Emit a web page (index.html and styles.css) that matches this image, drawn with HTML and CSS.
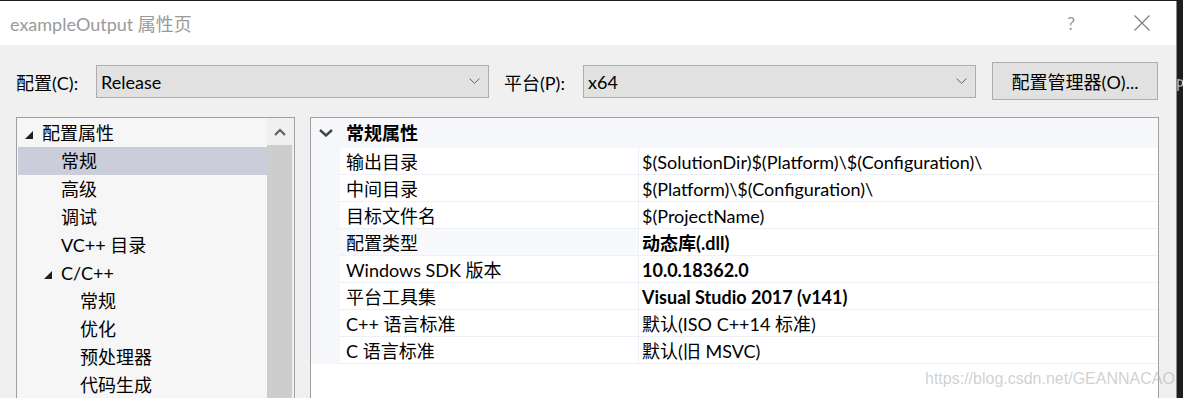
FILE: index.html
```html
<!DOCTYPE html>
<html>
<head>
<meta charset="utf-8">
<link rel="stylesheet" href="styles.css">
</head>
<body>
<div class="screen">
  <div class="window">
    <div class="titlebar">
      <span class="title">exampleOutput 属性页</span>
      <span class="help">?</span>
      <span class="close"><svg width="16" height="16" viewBox="0 0 16 16"><path d="M0.5 0.5 L15.5 15.5 M15.5 0.5 L0.5 15.5" stroke="#7a7a7a" stroke-width="1.1" fill="none"/></svg></span>
    </div>
    <div class="toolbar">
      <span class="lbl lbl-config">配置(C):</span>
      <div class="select"><span class="sel-text">Release</span><svg class="chev" width="11" height="6" viewBox="0 0 11 6"><path d="M0.5 0.5 L5.5 5.3 L10.5 0.5" stroke="#606060" stroke-width="1" fill="none"/></svg></div>
      <span class="lbl lbl-platform">平台(P):</span>
      <div class="select"><span class="sel-text">x64</span><svg class="chev" width="11" height="6" viewBox="0 0 11 6"><path d="M0.5 0.5 L5.5 5.3 L10.5 0.5" stroke="#606060" stroke-width="1" fill="none"/></svg></div>
      <button class="btn">配置管理器(O)...</button>
    </div>
    <div class="content">
      <div class="tree">
        <ul class="tree-list">
          <li class="item lv0"><span class="tw"><svg width="8" height="8" viewBox="0 0 8 8"><polygon points="8,0 8,8 0,8" fill="#1e1e1e"/></svg></span>配置属性</li>
          <li class="item lv1 selected"><span class="tw"></span>常规</li>
          <li class="item lv1"><span class="tw"></span>高级</li>
          <li class="item lv1"><span class="tw"></span>调试</li>
          <li class="item lv1"><span class="tw"></span>VC++ 目录</li>
          <li class="item lv1"><span class="tw"><svg width="8" height="8" viewBox="0 0 8 8"><polygon points="8,0 8,8 0,8" fill="#1e1e1e"/></svg></span>C/C++</li>
          <li class="item lv2"><span class="tw"></span>常规</li>
          <li class="item lv2"><span class="tw"></span>优化</li>
          <li class="item lv2"><span class="tw"></span>预处理器</li>
          <li class="item lv2"><span class="tw"></span>代码生成</li>
        </ul>
        <div class="scrollbar">
          <div class="sb-up"><svg width="12" height="8" viewBox="0 0 12 8"><path d="M1 7 L6 2 L11 7" stroke="#606060" stroke-width="2.2" fill="none"/></svg></div>
          <div class="sb-thumb"></div>
        </div>
      </div>
      <div class="grid">
        <div class="grid-head">
          <span class="gutter"><svg width="14" height="8" viewBox="0 0 14 8"><path d="M1 1 L7 6.5 L13 1" stroke="#444" stroke-width="2.4" fill="none"/></svg></span>
          <span class="head-text">常规属性</span>
        </div>
        <div class="grid-row"><span class="gutter"></span><span class="name">输出目录</span><span class="value">$(SolutionDir)$(Platform)\$(Configuration)\</span></div>
        <div class="grid-row"><span class="gutter"></span><span class="name">中间目录</span><span class="value">$(Platform)\$(Configuration)\</span></div>
        <div class="grid-row"><span class="gutter"></span><span class="name">目标文件名</span><span class="value">$(ProjectName)</span></div>
        <div class="grid-row hover"><span class="gutter"></span><span class="name">配置类型</span><span class="value bold">动态库(.dll)</span></div>
        <div class="grid-row"><span class="gutter"></span><span class="name">Windows SDK 版本</span><span class="value bold">10.0.18362.0</span></div>
        <div class="grid-row"><span class="gutter"></span><span class="name">平台工具集</span><span class="value bold">Visual Studio 2017 (v141)</span></div>
        <div class="grid-row"><span class="gutter"></span><span class="name">C++ 语言标准</span><span class="value">默认(ISO C++14 标准)</span></div>
        <div class="grid-row"><span class="gutter"></span><span class="name">C 语言标准</span><span class="value">默认(旧 MSVC)</span></div>
      </div>
    </div>
  </div>
  <svg class="edge-mark" width="6" height="14" viewBox="0 0 6 14"><path d="M1 1 V13 M1 2 H4 Q5.5 2 5.5 5 Q5.5 8 4 8 H1" stroke="#d8d8d8" stroke-width="1.2" fill="none"/></svg>
  <div class="watermark">https://blog.csdn.net/GEANNACAO</div>
</div>
</body>
</html>
```
FILE: styles.css
```css
html, body {
  margin: 0;
  padding: 0;
}
body {
  background: #1e1e1e;
  width: 1183px;
  height: 398px;
  overflow: hidden;
  font-family: "Lato", "Noto Sans CJK SC", sans-serif;
  color: #000;
}
.screen {
  position: relative;
  width: 1183px;
  height: 398px;
  padding-top: 1px;
  box-sizing: border-box;
}
.window {
  width: 1177px;
  height: 397px;
  box-sizing: border-box;
  border-right: 1px solid #8c8c8c;
  background: #f0f0f0;
  overflow: hidden;
}
.titlebar {
  height: 44px;
  background: #fff;
  display: flex;
  align-items: center;
  padding-left: 10px;
}
.title {
  flex: 1;
  font-size: 18px;
  color: #9a9a9a;
}
.help {
  font-size: 18px;
  color: #9a9a9a;
  margin-right: 59px;
}
.close {
  display: flex;
  margin-right: 26px;
}
.toolbar {
  height: 72px;
  display: flex;
  align-items: center;
  padding-left: 16px;
  font-size: 18px;
}
.lbl {
  flex: none;
  white-space: nowrap;
  padding-top: 2px;
}
.lbl-config {
  width: 80px;
}
.lbl-platform {
  width: 79px;
  margin-left: 15px;
}
.select {
  flex: none;
  width: 393px;
  height: 33px;
  box-sizing: border-box;
  border: 1px solid #adadad;
  background: #e1e1e1;
  display: flex;
  align-items: center;
  padding: 0 8px 0 4px;
}
.sel-text {
  flex: 1;
  padding-top: 1px;
}
.chev {
  display: block;
}
.btn {
  flex: none;
  margin-left: 16px;
  width: 166px;
  height: 38px;
  box-sizing: border-box;
  border: 1px solid #adadad;
  background: #e1e1e1;
  font-family: inherit;
  font-size: 18px;
  color: #000;
  padding: 0;
}
.content {
  display: flex;
  padding-left: 16px;
  gap: 15px;
}
.tree {
  flex: none;
  width: 279px;
  height: 300px;
  box-sizing: border-box;
  border: 1px solid #a0a0a0;
  background: #f6f6f6;
  display: flex;
}
.tree-list {
  list-style: none;
  margin: 0;
  width: 250px;
  box-sizing: border-box;
  padding: 1px 0 0 1px;
}
.item {
  height: 28px;
  line-height: 28px;
  font-size: 18px;
  display: flex;
  align-items: center;
  white-space: nowrap;
}
.item.lv0 { padding-left: 5px; }
.item.lv1 { padding-left: 24px; }
.item.lv2 { padding-left: 43px; }
.item.selected {
  background: #cbcdda;
}
.tw {
  width: 19px;
  flex: none;
  display: flex;
  align-items: center;
  padding-left: 2px;
  box-sizing: border-box;
  height: 28px;
  padding-top: 3px;
}
.scrollbar {
  width: 27px;
  background: #f0f0f0;
  display: flex;
  flex-direction: column;
}
.sb-up {
  height: 27px;
  display: flex;
  align-items: center;
  justify-content: center;
  padding-right: 2px;
}
.sb-thumb {
  flex: 1;
  background: #cdcdcd;
  margin-right: 2px;
}
.grid {
  flex: none;
  width: 849px;
  height: 300px;
  box-sizing: border-box;
  border: 1px solid #a0a0a0;
  background: #fff;
}
.grid-head {
  height: 30px;
  background: #f5f7fb;
  display: flex;
  align-items: center;
}
.gutter {
  flex: none;
  width: 29px;
  align-self: stretch;
  display: flex;
  align-items: center;
  justify-content: center;
  background: #f5f7fb;
}
.head-text {
  padding-left: 6px;
  font-size: 18px;
  font-weight: bold;
  line-height: 30px;
}
.grid-row {
  height: 27px;
  display: flex;
  font-size: 18px;
}
.name, .value {
  box-sizing: border-box;
  border-bottom: 1px solid #edf0f7;
  line-height: 26px;
  padding-top: 1px;
  white-space: nowrap;
}
.name {
  flex: none;
  width: 299px;
  border-right: 1px solid #edf0f7;
  padding-left: 6px;
}
.value {
  flex: 1;
  padding-left: 3px;
}
.hover .name {
  background: #f7f9fc;
}
.bold {
  font-weight: bold;
}
.edge-mark {
  position: absolute;
  left: 1177px;
  top: 78px;
}
.watermark {
  position: absolute;
  left: 925px;
  top: 370px;
  font-family: "Liberation Sans", Arial, sans-serif;
  font-size: 16px;
  color: rgba(170, 170, 170, 0.55);
  white-space: nowrap;
}
```
